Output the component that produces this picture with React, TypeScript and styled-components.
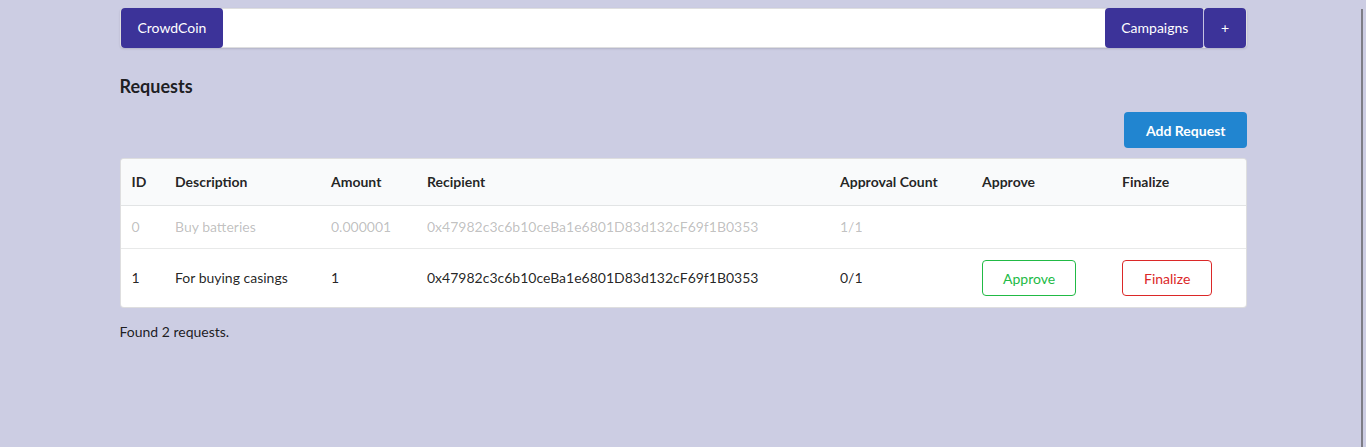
import React from "react";
import styled, { createGlobalStyle } from "styled-components";

type requestType = {
    id: number,
    description: string,
    amount: string,
    recipient: string,
    approvals: string,
    complete: boolean,
}

const requests: requestType[] = [
    { id: 0, description: 'Buy batteries', amount: '0.000001', recipient: '0x47982c3c6b10ceBa1e6801D83d132cF69f1B0353', approvals: '1/1', complete: true },
    { id: 1, description: 'For buying casings', amount: '1', recipient: '0x47982c3c6b10ceBa1e6801D83d132cF69f1B0353', approvals: '0/1', complete: false },
]

const columns = [
    { label: 'ID', width: 43.5 },
    { label: 'Description', width: 156 },
    { label: 'Amount', width: 96 },
    { label: 'Recipient', width: 413 },
    { label: 'Approval Count', width: 142 },
    { label: 'Approve', width: 140 },
    { label: 'Finalize', width: 134.5 },
]

const GlobalStyle = createGlobalStyle`
    html, body{
        margin: 0;
        padding: 0;
        background: #cccde3;
        font-family: Lato, "Noto Sans", sans-serif;
        font-size: 14px;
        color: rgba(0,0,0,.87);
    }
`;

const Page = styled.div`
    width: 1127px;
    margin: 0 auto;
    padding-top: 8px;
    display: flex;
    flex-direction: column;
`;

const Menu = styled.nav`
    display: flex;
    height: 40px;
    box-sizing: border-box;
    background: #fff;
    border: 1px solid rgba(34,36,38,.15);
    border-radius: 4px;
    box-shadow: 0 1px 2px 0 rgba(34,36,38,.15);
`;

const MenuItem = styled.a`
    display: flex;
    align-items: center;
    margin: -1px 0;
    padding: 0 ${props => props.$pad}px;
    background: #3c3399;
    color: #fff;
    font-size: 14px;
    line-height: 1;
    border-radius: 4px;
    text-decoration: none;
    box-shadow: ${props => props.$divider ? '-1px 0 0 0 rgba(255,255,255,.7)' : 'none'};
`;

const Spacer = styled.div`
    flex: 1;
`;

const Title = styled.h3`
    margin: 27px 0 0;
    font-size: 18px;
    line-height: 23px;
    font-weight: 700;
    color: rgba(0,0,0,.87);
`;

const Actions = styled.div`
    display: flex;
    justify-content: flex-end;
    margin-top: 14px;
`;

const PrimaryButton = styled.button`
    height: 36px;
    padding: 0 21px 0 22px;
    background: #2185d0;
    color: #fff;
    border: none;
    border-radius: 4px;
    font-family: Lato, sans-serif;
    font-size: 14px;
    font-weight: 700;
    cursor: pointer;
`;

const Table = styled.table`
    margin-top: 10px;
    width: 1127px;
    border-collapse: separate;
    border-spacing: 0;
    background: #fff;
    border: 1px solid rgba(34,36,38,.15);
    border-radius: 4px;
    table-layout: fixed;
    th{
        background: #f9fafb;
        text-align: left;
        font-weight: 700;
        padding: 13px 11px;
        line-height: 20px;
        border-bottom: 1px solid rgba(34,36,38,.1);
    }
    th:first-child{ border-top-left-radius: 4px; }
    th:last-child{ border-top-right-radius: 4px; }
`;

const Row = styled.tr`
    color: ${props => props.$disabled ? 'rgba(40,40,40,.3)' : 'rgba(0,0,0,.87)'};
    td{
        padding: 11px;
        line-height: 20px;
        border-top: ${props => props.$first ? 'none' : '1px solid rgba(34,36,38,.1)'};
        white-space: nowrap;
    }
`;

const BasicButton = styled.button`
    height: 36px;
    padding: 0 ${props => props.$pad}px;
    background: transparent;
    color: ${props => props.$color};
    border: 1px solid ${props => props.$color};
    border-radius: 4px;
    font-family: Lato, sans-serif;
    font-size: 14px;
    cursor: pointer;
`;

const Footer = styled.div`
    margin-top: 14px;
    line-height: 20px;
`;

const EdgeLine = styled.div`
    position: fixed;
    left: 1361px;
    top: 9px;
    bottom: 0;
    width: 2px;
    background: #7d7d86;
`;

const App = () => {
    return (
        <>
            <GlobalStyle />
            <Page>
                <Menu>
                    <MenuItem $pad={17}>CrowdCoin</MenuItem>
                    <Spacer />
                    <MenuItem $pad={16}>Campaigns</MenuItem>
                    <MenuItem $pad={16.5} $divider>+</MenuItem>
                </Menu>
                <Title>Requests</Title>
                <Actions>
                    <PrimaryButton>Add Request</PrimaryButton>
                </Actions>
                <Table>
                    <colgroup>
                        {columns.map(c => <col key={c.label} style={{ width: c.width }} />)}
                    </colgroup>
                    <thead>
                        <tr>
                            {columns.map(c => <th key={c.label}>{c.label}</th>)}
                        </tr>
                    </thead>
                    <tbody>
                        {
                            requests.map((r, i) => {
                                return (
                                    <Row key={r.id} $disabled={r.complete} $first={i === 0}>
                                        <td>{r.id}</td>
                                        <td>{r.description}</td>
                                        <td>{r.amount}</td>
                                        <td>{r.recipient}</td>
                                        <td>{r.approvals}</td>
                                        <td>{r.complete ? null : <BasicButton $color="#21ba45" $pad={20}>Approve</BasicButton>}</td>
                                        <td>{r.complete ? null : <BasicButton $color="#db2828" $pad={21}>Finalize</BasicButton>}</td>
                                    </Row>
                                )
                            })
                        }
                    </tbody>
                </Table>
                <Footer>Found 2 requests.</Footer>
            </Page>
            <EdgeLine />
        </>
    );
}

export default App;
